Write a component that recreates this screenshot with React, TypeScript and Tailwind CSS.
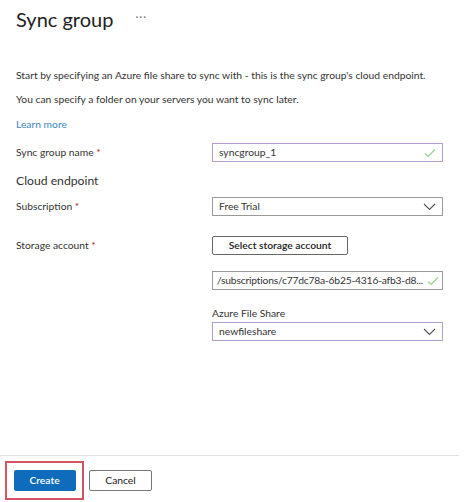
import React from "react";

const Check = () => (
  <svg width="12" height="10" viewBox="0 0 12 10" className="shrink-0">
    <path d="M1 5.5 L4.2 8.5 L11 1.5" fill="none" stroke="#9ccf8c" strokeWidth="1.2" />
  </svg>
);

const Chevron = () => (
  <svg width="13" height="8" viewBox="0 0 13 8" className="shrink-0">
    <path d="M1 1 L6.5 6.5 L12 1" fill="none" stroke="#555" strokeWidth="1.1" />
  </svg>
);

export default function App() {
  return (
    <div
      className="w-[474px] h-[502px] bg-white text-[#323130] relative overflow-hidden"
      style={{ fontFamily: '"Segoe UI", Lato, "Noto Sans", sans-serif' }}
    >
      <div className="flex items-center pl-[16px] pt-[6px] h-[32px]">
        <span className="text-[20px] leading-none text-[#222]">Sync group</span>
        <span className="ml-[22px] text-[11px] text-[#777] tracking-[1px] -mt-[4px]">···</span>
      </div>

      <div className="pl-[16px] pt-[36px] text-[10.3px] leading-[14px] text-[#333]">
        <p>Start by specifying an Azure file share to sync with - this is the sync group's cloud endpoint.</p>
        <p className="mt-[10px]">You can specify a folder on your servers you want to sync later.</p>
        <p className="mt-[11px] text-[#3a86c8]">Learn more</p>
      </div>

      <div className="pl-[16px] pr-[31px] mt-[12px] text-[10.3px] text-[#333]">
        <div className="flex items-center h-[19px]">
          <div className="w-[196px]">
            Sync group name <span className="text-[#a4262c]">*</span>
          </div>
          <div className="flex-1 h-[19px] border border-[#b29cd0] flex items-center justify-between px-[6px]">
            <span>syncgroup_1</span>
            <Check />
          </div>
        </div>

        <div className="mt-[11px] text-[12.2px] leading-[16px]">Cloud endpoint</div>

        <div className="flex items-center h-[19px] mt-[8px]">
          <div className="w-[196px]">
            Subscription <span className="text-[#a4262c]">*</span>
          </div>
          <div className="flex-1 h-[19px] border border-[#999] flex items-center justify-between px-[6px]">
            <span>Free Trial</span>
            <Chevron />
          </div>
        </div>

        <div className="flex items-center h-[19px] mt-[20px]">
          <div className="w-[196px]">
            Storage account <span className="text-[#a4262c]">*</span>
          </div>
          <div className="w-[136px] h-[19px] border border-[#666] rounded-[2px] flex items-center justify-center font-semibold text-[#222]">
            Select storage account
          </div>
        </div>

        <div className="flex mt-[16px]">
          <div className="w-[196px]" />
          <div className="flex-1 min-w-0 h-[19px] border border-[#999] flex items-center justify-between pl-[4px] pr-[3px]">
            <span className="whitespace-nowrap tracking-[-0.2px]">/subscriptions/c77dc78a-6b25-4316-afb3-d8...</span>
            <Check />
          </div>
        </div>

        <div className="flex mt-[17px]">
          <div className="w-[196px]" />
          <div className="flex-1">
            <div className="leading-[12px]">Azure File Share</div>
            <div className="mt-[3px] h-[19px] border border-[#b29cd0] flex items-center justify-between px-[6px]">
              <span>newfileshare</span>
              <Chevron />
            </div>
          </div>
        </div>
      </div>

      <div className="absolute left-0 top-[455px] w-[459px] border-t border-[#e1e1e1]" />

      <div className="absolute left-0 top-[461px] w-[459px] flex items-center">
        <div className="ml-[5px] w-[79px] h-[39px] border-2 border-[#d6535f] flex items-center justify-center">
          <button className="w-[62px] h-[21px] bg-[#0f6cbd] rounded-[2px] text-white text-[10.3px] font-semibold">
            Create
          </button>
        </div>
        <button className="ml-[5px] w-[63px] h-[21px] border border-[#777] rounded-[2px] text-[10.3px] text-[#222]">
          Cancel
        </button>
      </div>
    </div>
  );
}
